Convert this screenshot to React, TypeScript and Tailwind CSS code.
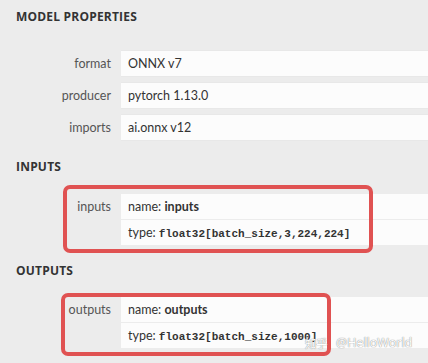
import React from 'react';

const sans = "font-['Segoe_UI','Open_Sans','Noto_Sans',sans-serif]";
const body = "font-['Segoe_UI','Lato','Open_Sans',sans-serif]";
const mono = "font-['Consolas','Liberation_Mono',monospace]";

const props = [
  { label: 'format', value: 'ONNX v7' },
  { label: 'producer', value: 'pytorch 1.13.0' },
  { label: 'imports', value: 'ai.onnx v12' },
];

const Heading: React.FC<{ children: React.ReactNode; className?: string }> = ({ children, className }) => (
  <div className={`pl-4 text-[12px] font-bold text-[#333] leading-[16px] tracking-[0.2px] ${sans} ${className ?? ''}`}>{children}</div>
);

const IoBlock: React.FC<{ label: string; name: string; type: string; top: string }> = ({ label, name, type, top }) => (
  <div className={`flex ${top}`}>
    <div className="w-[121px] shrink-0 pr-[10px] text-right text-[12.5px] text-[#555] leading-[26px]">{label}</div>
    <div className="flex-1 flex flex-col gap-px">
      <div className="h-[25px] bg-[#fcfcfc] pl-[7px] text-[12.5px] text-[#333] leading-[25px]">
        name: <span className="font-bold">{name}</span>
      </div>
      <div className="h-[25px] bg-[#fcfcfc] pl-[7px] text-[12.5px] text-[#333] leading-[25px]">
        type: <span className={`${mono} font-bold text-[11px]`}>{type}</span>
      </div>
    </div>
  </div>
);

export default function App() {
  return (
    <div className={`relative w-[428px] h-[363px] overflow-hidden bg-[#ececec] ${body}`}>
      <Heading className="pt-[9px]">MODEL PROPERTIES</Heading>

      <div className="mt-[25px] flex flex-col gap-[5px]">
        {props.map(p => (
          <div key={p.label} className="flex h-[27px]">
            <div className="w-[121px] shrink-0 pr-[10px] text-right text-[12.5px] text-[#555] leading-[27px]">{p.label}</div>
            <div className="flex-1 bg-[#fcfcfc] border-y border-[#e8e8e8] pl-[7px] text-[12.5px] text-[#333] leading-[25px]">{p.value}</div>
          </div>
        ))}
      </div>

      <Heading className="mt-[18px]">INPUTS</Heading>
      <IoBlock label="inputs" name="inputs" type="float32[batch_size,3,224,224]" top="mt-[19px]" />

      <Heading className="mt-[18px]">OUTPUTS</Heading>
      <IoBlock label="outputs" name="outputs" type="float32[batch_size,1000]" top="mt-[18px]" />

      {/* red annotation boxes */}
      <div className="absolute left-[63px] top-[185px] w-[310px] h-[68px] border-[4px] border-[#e05252] rounded-[7px]" />
      <div className="absolute left-[61px] top-[293px] w-[270px] h-[63px] border-[4px] border-[#e05252] rounded-[7px]" />

      {/* watermark */}
      <div className="absolute left-[305px] top-[334px] flex items-center gap-[9px] whitespace-nowrap text-[12.5px] leading-[18px] text-white [text-shadow:0_0_1px_#888,0_0_1px_#aaa] font-['Open_Sans','Noto_Sans_CJK_SC',sans-serif]">
        <span className="font-['Noto_Sans_CJK_SC',sans-serif] text-[11.5px] tracking-[-0.5px]">知乎</span>
        <span>@HelloWorld</span>
      </div>
    </div>
  );
}
